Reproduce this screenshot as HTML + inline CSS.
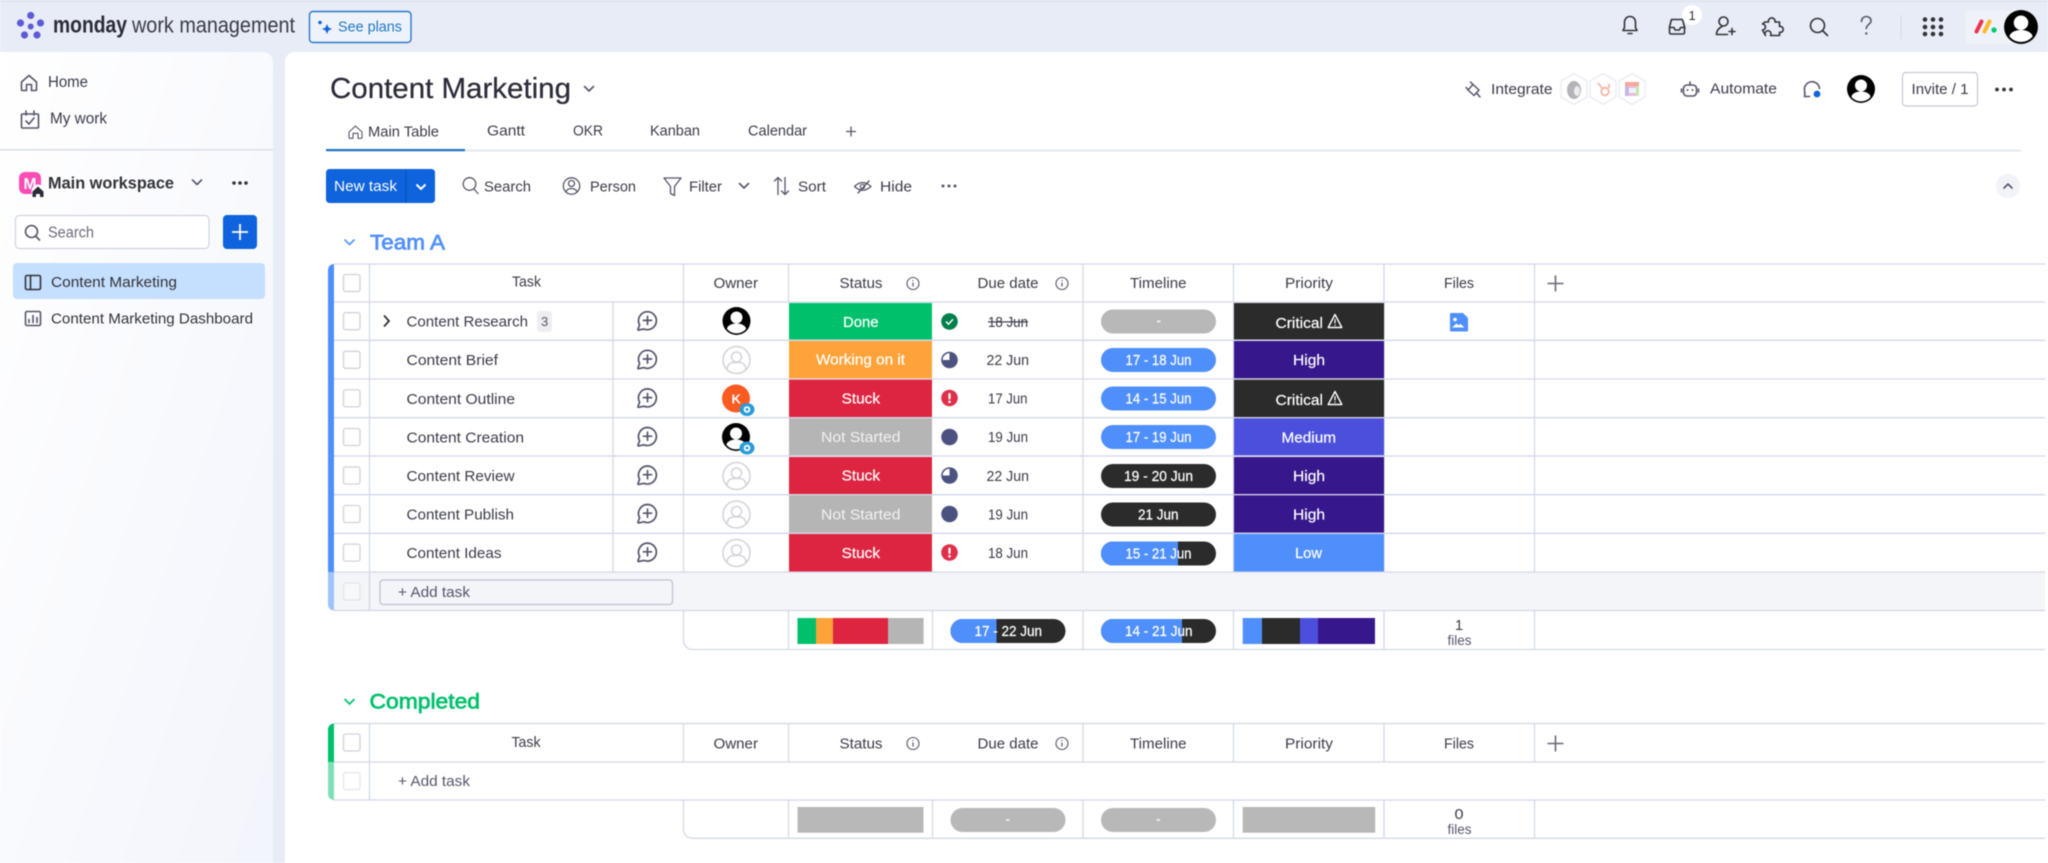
<!DOCTYPE html>
<html><head><meta charset="utf-8"><title>Content Marketing</title>
<style>
html,body{margin:0;padding:0;background:#fff;width:2048px;height:863px;overflow:hidden}
svg{display:block;filter:blur(.45px)}
text{font-family:"Liberation Sans",sans-serif;font-size:15px;fill:#323338}
.w{fill:#fff;stroke:#fff;stroke-width:.2}.g{fill:#55566a}.hd{fill:#3a3b48}
.s{fill:none;stroke:#55566a;stroke-width:1.6;stroke-linecap:round;stroke-linejoin:round}
.l{stroke:#d4d7e8;stroke-width:1.3;fill:none}
.cb{fill:#fff;stroke:#d0d2da;stroke-width:1.3}
</style></head><body>
<svg width="2048" height="863" viewBox="0 0 2048 863" xmlns="http://www.w3.org/2000/svg">
<defs>
<linearGradient id="sb" x1="0" y1="0" x2="1" y2="1"><stop offset="0" stop-color="#ffffff"/><stop offset="1" stop-color="#f3f5fc"/></linearGradient>
<filter id="sh" x="-5%" y="-50%" width="110%" height="200%"><feGaussianBlur stdDeviation="4"/></filter>
<g id="cm"><path class="s" d="M.5-9a9 9 0 1 1-3.600 17.300L-8.400 9.400q-.9 0-.6-.9L-7.400 4.300A9 9 0 0 1 .5-9z" style="stroke-width:1.700"/><path class="s" d="M.5-4.400v8.200M-3.600-.3h8.200" style="stroke-width:1.700"/></g>
<g id="av"><circle r="14" fill="#000"/><circle cy="-3.500" r="6" fill="#fff"/><path d="M-9.500 8a9.500 5.500 0 0 1 19 0a12.500 12.500 0 0 1-19 0z" fill="#fff"/></g>
<g id="ae"><circle r="13.500" fill="#fff" stroke="#d3d4da" stroke-width="1.600"/><circle cy="-3" r="5" fill="none" stroke="#d3d4da" stroke-width="1.500"/><path d="M-9.500 9.500q.5-6.500 6-7h7q5.500.5 6 7" fill="none" stroke="#d3d4da" stroke-width="1.500"/></g>
<g id="eye"><ellipse rx="7.500" ry="6.500" fill="#2a9bd8"/><circle r="3.300" fill="#fff"/><circle r="1.500" fill="#2a9bd8"/></g>
<g id="ok"><circle r="8.300" fill="#037f4c"/><path d="M-3.500 0l2.500 2.700 4.500-5" fill="none" stroke="#fff" stroke-width="1.500"/></g>
<g id="st"><circle r="8.300" fill="#df2f4a"/><rect x="-1.100" y="-5" width="2.200" height="6.500" rx="1" fill="#fff"/><circle cy="3.800" r="1.300" fill="#fff"/></g>
<g id="ns"><circle r="8.300" fill="#4c5280"/></g>
<g id="hf"><circle r="8.300" fill="#4c5280"/><path d="M0 0V-6.800A6.800 6.800 0 0 0-6.800 0z" fill="#fff"/></g>
<g id="inf"><circle r="6" fill="none" stroke="#55566a" stroke-width="1.100"/><path d="M0-1v4M0-3.400v1" stroke="#55566a" stroke-width="1.200"/></g>
<g id="wa"><path d="M0-7.500L6.800 5.500H-6.800z" fill="none" stroke="#fff" stroke-width="1.400" stroke-linejoin="round"/><path d="M0-3v4.500M0 2.600v1.300" stroke="#fff" stroke-width="1.200"/></g>
<g id="pl"><path d="M0-8v16M-8 0h16" stroke="#676879" stroke-width="1.600"/></g>
<g id="rb"><rect class="cb" x="343.500" y="-8.500" width="16.500" height="17" rx="2"/><use href="#cm" x="647" y="-.500"/></g>
<g id="ch"><path class="s" d="M-4.500-2.500L0 2l4.500-4.500"/></g>
</defs>

<rect width="2048" height="863" fill="#e8ecf6"/>
<rect width="2048" height="2" fill="#dfe3ec"/>
<path d="M0 52H263a10 10 0 0 1 10 10V863H0z" fill="url(#sb)"/>
<path d="M295 52H2048V863H285V62a10 10 0 0 1 10-10z" fill="#fff"/>

<!-- top bar -->
<g fill="#5b5bd6"><circle cx="30.700" cy="15.500" r="3.600"/><circle cx="20.500" cy="23" r="3.600"/><circle cx="40.500" cy="23" r="3.600"/><circle cx="30.700" cy="26.500" r="3"/><circle cx="24.500" cy="35" r="3.600"/><circle cx="37" cy="35" r="3.600"/></g>
<text x="53" y="32.500" style="font-size:23px;font-weight:700;fill:#2b2c38" textLength="74" lengthAdjust="spacingAndGlyphs">monday</text>
<text x="132" y="32.500" style="font-size:22px;fill:#3a3b48" textLength="163" lengthAdjust="spacingAndGlyphs">work management</text>
<rect x="309.500" y="11.500" width="101.500" height="31" rx="3.500" fill="#eef3fb" stroke="#2b78c5" stroke-width="1.400"/>
<path d="M327 24l1.500 3.500 3.500 1.500-3.500 1.500-1.500 3.500-1.500-3.500-3.500-1.500 3.500-1.500z" fill="#0f63dc"/><circle cx="320" cy="22.500" r="1.800" fill="#0f63dc"/>
<text x="338" y="31.500" style="font-size:15px;fill:#1f76c2" textLength="64" lengthAdjust="spacingAndGlyphs">See plans</text>

<path class="s" d="M1630 16.500c-3.500 0-5.500 2.700-5.500 6v5l-1.500 3h14l-1.500-3v-5c0-3.300-2-6-5.500-6zM1628 33.500h4" style="stroke:#323338"/>
<path class="s" d="M1669.500 27l2-7.500h11l2 7.500v5.500a1.500 1.500 0 0 1-1.500 1.500h-12a1.500 1.500 0 0 1-1.500-1.500zM1669.500 27.500h4.500l1 2.500h4.500l1-2.500h4.500" style="stroke:#323338"/>
<circle cx="1692" cy="15" r="10" fill="#fff"/><text x="1688.500" y="20" style="font-size:13px" textLength="6">1</text>
<circle class="s" cx="1723.500" cy="21.500" r="4.500" style="stroke:#323338"/><path class="s" d="M1722 26.500c-3 1.500-5.500 4-5.500 8h11M1729 31.500h6M1732 28.500v6" style="stroke:#323338"/>
<path class="s" d="M1765 22h3.500a3.300 3.300 0 1 1 6.500-1.500V22h4.500v4.500a3 3 0 1 1 0 5.800v3.200h-9a3 3 0 1 0-5 0l-3-5.500a3 3 0 0 0 0-6z" style="stroke:#323338"/>
<circle class="s" cx="1817.500" cy="25.500" r="7" style="stroke:#323338"/><path class="s" d="M1823 31l4.500 4.500" style="stroke:#323338"/>
<path class="s" d="M1861.500 21.500c0-3.500 2.500-5 4.800-5s4.700 1.500 4.700 4.500-4.500 3.500-4.700 7.500"/><circle cx="1866.300" cy="33.500" r="1.200" fill="#55566a"/>
<rect x="1900.500" y="15" width="1.200" height="24" fill="#d7dbe6"/>
<g fill="#323338"><circle cx="1925" cy="19.500" r="2.300"/><circle cx="1933" cy="19.500" r="2.300"/><circle cx="1941" cy="19.500" r="2.300"/><circle cx="1925" cy="27" r="2.300"/><circle cx="1933" cy="27" r="2.300"/><circle cx="1941" cy="27" r="2.300"/><circle cx="1925" cy="34" r="2.300"/><circle cx="1933" cy="34" r="2.300"/><circle cx="1941" cy="34" r="2.300"/></g>
<rect x="1965" y="10" width="60" height="34" rx="4" fill="#f0f2f9"/>
<path d="M1976.500 31.500l5-10" stroke="#e8364f" stroke-width="4" stroke-linecap="round"/><path d="M1984.500 31.500l5-10" stroke="#fcb92c" stroke-width="4" stroke-linecap="round"/><circle cx="1994" cy="30" r="2.600" fill="#00c875"/>
<g transform="translate(2021 27) scale(1.210)"><use href="#av"/></g>

<!-- sidebar -->
<path class="s" d="M21.500 82l7.500-6.500 7.500 6.500v7.500a1 1 0 0 1-1 1h-4v-6h-5v6h-4a1 1 0 0 1-1-1z"/>
<text x="48" y="87" style="font-size:15.500px" textLength="40" lengthAdjust="spacingAndGlyphs" class="hd">Home</text>
<rect class="s" x="21.500" y="114" width="17" height="14" rx="1"/><path class="s" d="M26 111v4M34 111v4M26 121l3 3 5-6"/>
<text x="50" y="123.500" style="font-size:15.500px" textLength="57" lengthAdjust="spacingAndGlyphs" class="hd">My work</text>
<rect x="0" y="149" width="273" height="1.600" fill="#dcdfe9"/>
<rect x="19" y="172" width="22" height="22" rx="6" fill="#fb4bb4"/>
<text x="23.500" y="189" style="font-size:16px;font-weight:700;fill:#fff" textLength="13" lengthAdjust="spacingAndGlyphs">M</text>
<circle cx="38" cy="191" r="6.500" fill="#fff"/><path d="M32.500 191.500l5.500-5 5.500 5v5.500h-3.500v-3h-4v3h-3.500z" fill="#2b2c38"/>
<text x="48" y="188.500" style="font-size:17px;font-weight:700" textLength="126" lengthAdjust="spacingAndGlyphs">Main workspace</text>
<g transform="translate(197 182.500)"><use href="#ch"/></g>
<g fill="#323338"><circle cx="234" cy="183" r="1.800"/><circle cx="240" cy="183" r="1.800"/><circle cx="246" cy="183" r="1.800"/></g>
<rect x="15.500" y="215.500" width="193.500" height="33" rx="4" fill="#fff" stroke="#d0d3df" stroke-width="1.200"/>
<circle class="s" cx="31.500" cy="231.500" r="6"/><path class="s" d="M36 236.500l3.500 3.500"/>
<text x="48" y="237.500" style="font-size:15.500px;fill:#6a6b7c" textLength="46" lengthAdjust="spacingAndGlyphs">Search</text>
<rect x="223" y="215" width="34" height="34" rx="4" fill="#0f63dc"/><path d="M240 224v16M232 232h16" stroke="#fff" stroke-width="1.800"/>
<rect x="13" y="263" width="252" height="36" rx="4" fill="#c5dffe"/>
<rect class="s" x="25.500" y="275.500" width="15" height="14" rx="1.500" style="stroke:#323338"/><path class="s" d="M30.500 275.500v14" style="stroke:#323338"/>
<text x="51" y="287" textLength="126" lengthAdjust="spacingAndGlyphs">Content Marketing</text>
<rect class="s" x="25.500" y="311.500" width="15" height="14" rx="1.500"/><path class="s" d="M29 322.500v-3M33 322.500v-7M37 322.500v-5"/>
<text x="51" y="323.500" textLength="202" lengthAdjust="spacingAndGlyphs">Content Marketing Dashboard</text>

<!-- header -->
<text x="330" y="98" style="font-size:29px;fill:#2b2c38;stroke:#2b2c38;stroke-width:.25" textLength="241" lengthAdjust="spacingAndGlyphs">Content Marketing</text>
<g transform="translate(589 89)"><use href="#ch"/></g>
<path class="s" d="M1473 84.500l6 5.500-5 5.500-6-5.500zM1466 87.500l2.500 2.500M1470.500 82l2.500 2.500M1477 93.500l3 3.500" style="stroke-width:1.500"/>
<text x="1491" y="94" textLength="61.500" lengthAdjust="spacingAndGlyphs" class="hd">Integrate</text>
<g fill="#fff" stroke="#e9ebf2" stroke-width="1.400"><polygon points="1574,73.500 1587,81 1587,97 1574,104.500 1561,97 1561,81"/><polygon points="1603,73.500 1616,81 1616,97 1603,104.500 1590,97 1590,81"/><polygon points="1632,73.500 1645,81 1645,97 1632,104.500 1619,97 1619,81"/></g>
<ellipse cx="1574" cy="90" rx="7" ry="9" fill="#b4b4b8"/><ellipse cx="1577" cy="91" rx="3" ry="5" fill="#ececee"/>
<path d="M1598 83l4 5M1609 84v4" fill="none" stroke="#f6b6a4" stroke-width="1.800"/><circle cx="1605" cy="91.500" r="3.800" fill="none" stroke="#f6b6a4" stroke-width="1.800"/>
<rect x="1625" y="82" width="14" height="14" fill="#e9bdd8"/><rect x="1625" y="82" width="14" height="4" fill="#f8a89c"/><rect x="1625" y="86" width="3.500" height="10" fill="#c2b6ee"/><rect x="1629" y="88" width="7" height="5" fill="#f1f3fb"/><rect x="1636" y="86" width="3" height="10" fill="#c4e8b4"/>
<rect class="s" x="1683.500" y="85" width="13" height="11" rx="3.500"/><path class="s" d="M1690 85v-3M1681.500 89v3M1698.500 89v3"/><circle cx="1687.500" cy="90" r="1" fill="#55566a"/><circle cx="1692.500" cy="90" r="1" fill="#55566a"/>
<text x="1710" y="93.500" textLength="67" lengthAdjust="spacingAndGlyphs" class="hd">Automate</text>
<path class="s" d="M1804.500 96.500c.8-2.500.3-4 0-6.500a7.500 7.500 0 0 1 15-1.500M1804.500 96.500h5"/><circle cx="1817" cy="94" r="3.400" fill="#0f63dc"/>
<use href="#av" x="1861" y="89"/>
<rect x="1902.500" y="72.500" width="75" height="33.500" rx="3.500" fill="#fff" stroke="#c8cad4" stroke-width="1.200"/>
<text x="1911.500" y="94" textLength="57" lengthAdjust="spacingAndGlyphs" class="hd">Invite / 1</text>
<g fill="#323338"><circle cx="1997" cy="89.500" r="1.900"/><circle cx="2004" cy="89.500" r="1.900"/><circle cx="2011" cy="89.500" r="1.900"/></g>

<!-- tabs -->
<path class="s" d="M349 132l6.500-6 6.500 6v5.500a.8.8 0 0 1-.8.8h-3.200v-5h-5v5h-3.200a.8.8 0 0 1-.8-.8z" style="stroke-width:1.100"/>
<text x="368" y="136.500" textLength="71" lengthAdjust="spacingAndGlyphs" class="hd">Main Table</text>
<text x="487" y="135.500" textLength="38" lengthAdjust="spacingAndGlyphs" class="hd">Gantt</text>
<text x="573" y="135.500" textLength="30" lengthAdjust="spacingAndGlyphs" class="hd">OKR</text>
<text x="650" y="135.500" textLength="50" lengthAdjust="spacingAndGlyphs" class="hd">Kanban</text>
<text x="748" y="135.500" textLength="59" lengthAdjust="spacingAndGlyphs" class="hd">Calendar</text>
<path d="M851 126.500v10M846 131.500h10" stroke="#55566a" stroke-width="1.300"/>
<rect x="326" y="149.800" width="1695" height="1.700" fill="#e1e4ed"/>
<rect x="326" y="149" width="139" height="2.200" fill="#1f76c2"/>

<!-- toolbar -->
<rect x="326" y="169" width="109" height="34" rx="3.500" fill="#0f63dc"/><rect x="405.500" y="169" width="1" height="34" fill="#0a4fb4"/>
<text x="334" y="191" style="fill:#fff" textLength="63" lengthAdjust="spacingAndGlyphs">New task</text>
<path d="M416.500 184.500l4.500 4.500 4.500-4.500" fill="none" stroke="#fff" stroke-width="2"/>
<circle cx="469.500" cy="184" r="6.300" class="s" style="stroke-width:1.300"/><path class="s" d="M474 189l4 4.500" style="stroke-width:1.300"/>
<text x="484" y="191.500" textLength="47" lengthAdjust="spacingAndGlyphs" class="hd">Search</text>
<circle class="s" cx="571.500" cy="186" r="8.200" style="stroke-width:1.300"/><circle class="s" cx="571.500" cy="183.500" r="3" style="stroke-width:1.300"/><path class="s" d="M566 192q1-3.500 5.500-3.500t5.500 3.500" style="stroke-width:1.300"/>
<text x="590" y="191.500" textLength="46" lengthAdjust="spacingAndGlyphs" class="hd">Person</text>
<path class="s" d="M664 178h17l-6.500 8.500v9l-4-2v-7z" style="stroke-width:1.300"/>
<text x="689" y="191.500" textLength="33" lengthAdjust="spacingAndGlyphs" class="hd">Filter</text>
<g transform="translate(744 186)"><use href="#ch"/></g>
<path class="s" d="M778 194.500v-17M774.500 181l3.500-3.500 3.500 3.500M785 177.500v17M781.500 191l3.500 3.500 3.500-3.500" style="stroke-width:1.300"/>
<text x="798" y="191.500" textLength="28" lengthAdjust="spacingAndGlyphs" class="hd">Sort</text>
<path class="s" d="M854.500 186.500q8-8 16.500 0q-8.500 7.500-16.500 0zM858 193l11-12" style="stroke-width:1.300"/><circle class="s" cx="862.500" cy="186.500" r="2.200" style="stroke-width:1.200"/>
<text x="880" y="191.500" textLength="32" lengthAdjust="spacingAndGlyphs" class="hd">Hide</text>
<g fill="#55566a"><circle cx="943" cy="186" r="1.500"/><circle cx="949" cy="186" r="1.500"/><circle cx="955" cy="186" r="1.500"/></g>
<circle cx="2008" cy="186" r="12" fill="#f1f3f8"/><path class="s" d="M2004 188l4-4 4 4"/>

<!-- TEAM A -->
<path d="M344.500 239.500l5 5 5-5" fill="none" stroke="#579bfc" stroke-width="1.800"/>
<text x="370" y="249.500" style="font-size:21px;fill:#4f8ffc;stroke:#4f8ffc;stroke-width:.7" textLength="75" lengthAdjust="spacingAndGlyphs">Team A</text>

<!-- lines team A -->
<path class="l" d="M334 264H2045M334 302H2045M334 340.300H2045M334 379H2045M334 417.700H2045M334 456H2045M334 494.700H2045M334 533.300H2045"/>
<rect x="334" y="572.500" width="1711" height="38" fill="#f4f5f9"/>
<path class="l" d="M334 572H2045M334 610.500H2045M692 649.500H2045"/>
<path d="M700 654H1520" stroke="#bcc0d0" stroke-width="3" opacity=".35" filter="url(#sh)"/>
<path class="l" d="M369.500 264V610M613 302V572M683.500 264V572M788.500 264V302M1083 264V572M1233.500 264V572M1384 264V572M1534.500 264V572"/>
<path class="l" d="M683.500 611V640a9 9 0 0 0 9 9.500M788.500 611V649M932.500 611V649M1083 611V649M1233.500 611V649M1384 611V649M1534.500 611V649"/>
<path d="M334 264a6 6 0 0 0-6 6V572h6z" fill="#4f8ffc"/>
<path d="M328 572V604a6 6 0 0 0 6 6.500V572z" fill="#9fc4fc"/>

<!-- header labels -->
<rect class="cb" x="343.500" y="274.500" width="16.500" height="17" rx="2"/>
<text x="512" y="286.500" textLength="29" lengthAdjust="spacingAndGlyphs" class="hd">Task</text>
<text x="713.500" y="288" textLength="44.500" lengthAdjust="spacingAndGlyphs" class="hd">Owner</text>
<text x="839.500" y="288" textLength="43" lengthAdjust="spacingAndGlyphs" class="hd">Status</text><use href="#inf" x="913" y="283.500"/>
<text x="977.500" y="288" textLength="61" lengthAdjust="spacingAndGlyphs" class="hd">Due date</text><use href="#inf" x="1062" y="283.500"/>
<text x="1130" y="288" textLength="56.500" lengthAdjust="spacingAndGlyphs" class="hd">Timeline</text>
<text x="1285" y="288" textLength="48" lengthAdjust="spacingAndGlyphs" class="hd">Priority</text>
<text x="1444" y="288" textLength="30" lengthAdjust="spacingAndGlyphs" class="hd">Files</text>
<use href="#pl" x="1555.500" y="283.500"/>

<!-- row bases -->
<use href="#rb" y="321.200"/><use href="#rb" y="359.800"/><use href="#rb" y="398.400"/><use href="#rb" y="437"/><use href="#rb" y="475.500"/><use href="#rb" y="514"/><use href="#rb" y="552.600"/>

<path d="M384 315.500l5 5.500-5 5.500" fill="none" stroke="#323338" stroke-width="1.800"/>
<text x="406.500" y="326.500" textLength="121.500" lengthAdjust="spacingAndGlyphs" class="hd">Content Research</text>
<rect x="537" y="311" width="15" height="21" rx="3" fill="#eceef2"/><text x="541" y="326" style="font-size:13px" class="g">3</text>
<text x="406.500" y="365" textLength="91.500" lengthAdjust="spacingAndGlyphs" class="hd">Content Brief</text>
<text x="406.500" y="404" textLength="108.500" lengthAdjust="spacingAndGlyphs" class="hd">Content Outline</text>
<text x="406.500" y="442.500" textLength="117.500" lengthAdjust="spacingAndGlyphs" class="hd">Content Creation</text>
<text x="406.500" y="481" textLength="108" lengthAdjust="spacingAndGlyphs" class="hd">Content Review</text>
<text x="406.500" y="519.500" textLength="107.500" lengthAdjust="spacingAndGlyphs" class="hd">Content Publish</text>
<text x="406.500" y="558" textLength="95" lengthAdjust="spacingAndGlyphs" class="hd">Content Ideas</text>

<!-- avatars -->
<use href="#av" x="736.500" y="321"/>
<use href="#ae" x="736.500" y="360"/>
<circle cx="736" cy="398.500" r="14" fill="#fb5a20"/><text x="731.500" y="403.500" style="font-size:13px;font-weight:700;fill:#fff">K</text><use href="#eye" x="747" y="409.500"/>
<use href="#av" x="736" y="437"/><use href="#eye" x="747" y="448"/>
<use href="#ae" x="736.500" y="476"/>
<use href="#ae" x="736.500" y="514.500"/>
<use href="#ae" x="736.500" y="553"/>

<!-- status -->
<rect x="789" y="303" width="143" height="36.500" fill="#00c06b"/>
<rect x="789" y="341" width="143" height="37.300" fill="#fda33a"/>
<rect x="789" y="379.700" width="143" height="37.300" fill="#dd2440"/>
<rect x="789" y="418.300" width="143" height="37" fill="#b5b5b5"/>
<rect x="789" y="457" width="143" height="37" fill="#dd2440"/>
<rect x="789" y="495.300" width="143" height="37.300" fill="#b5b5b5"/>
<rect x="789" y="534" width="143" height="37.500" fill="#dd2440"/>
<text x="843" y="327" class="w" textLength="35.500" lengthAdjust="spacingAndGlyphs">Done</text>
<text x="816" y="364.500" class="w" textLength="89" lengthAdjust="spacingAndGlyphs">Working on it</text>
<text x="841.700" y="403.500" class="w" textLength="38.300" lengthAdjust="spacingAndGlyphs">Stuck</text>
<text x="821" y="442" style="fill:#f2f2f2" textLength="79.500" lengthAdjust="spacingAndGlyphs">Not Started</text>
<text x="841.700" y="480.500" class="w" textLength="38.300" lengthAdjust="spacingAndGlyphs">Stuck</text>
<text x="821" y="519.500" style="fill:#f2f2f2" textLength="79.500" lengthAdjust="spacingAndGlyphs">Not Started</text>
<text x="841.700" y="558" class="w" textLength="38.300" lengthAdjust="spacingAndGlyphs">Stuck</text>

<!-- due -->
<use href="#ok" x="949.500" y="321.500"/><use href="#hf" x="949.500" y="360"/><use href="#st" x="949.500" y="398"/><use href="#ns" x="949.500" y="437"/><use href="#hf" x="949.500" y="475.500"/><use href="#ns" x="949.500" y="514"/><use href="#st" x="949.500" y="552.500"/>
<text x="988" y="327" style="font-size:14.500px" textLength="40" lengthAdjust="spacingAndGlyphs" class="hd">18 Jun</text><rect x="988" y="321.300" width="40" height="1.200" fill="#3a3b48"/>
<text x="986.500" y="365" style="font-size:14.500px" textLength="42.500" lengthAdjust="spacingAndGlyphs" class="hd">22 Jun</text>
<text x="988" y="403.500" style="font-size:14.500px" textLength="39.500" lengthAdjust="spacingAndGlyphs" class="hd">17 Jun</text>
<text x="988" y="442" style="font-size:14.500px" textLength="40" lengthAdjust="spacingAndGlyphs" class="hd">19 Jun</text>
<text x="986.500" y="481" style="font-size:14.500px" textLength="42.500" lengthAdjust="spacingAndGlyphs" class="hd">22 Jun</text>
<text x="988" y="519.500" style="font-size:14.500px" textLength="40" lengthAdjust="spacingAndGlyphs" class="hd">19 Jun</text>
<text x="988" y="558" style="font-size:14.500px" textLength="40" lengthAdjust="spacingAndGlyphs" class="hd">18 Jun</text>

<!-- timeline -->
<rect x="1101" y="309.500" width="115" height="24" rx="12" fill="#b8b8b8"/><rect x="1157" y="320.500" width="3.500" height="1.800" fill="#eee"/>
<rect x="1101" y="348" width="115" height="24" rx="12" fill="#4f8ffc"/><text x="1125.500" y="365" class="w" textLength="66" lengthAdjust="spacingAndGlyphs">17 - 18 Jun</text>
<rect x="1101" y="386.500" width="115" height="24" rx="12" fill="#4f8ffc"/><text x="1125.500" y="403.500" class="w" textLength="66" lengthAdjust="spacingAndGlyphs">14 - 15 Jun</text>
<rect x="1101" y="425" width="115" height="24" rx="12" fill="#4f8ffc"/><text x="1125.500" y="442" class="w" textLength="66" lengthAdjust="spacingAndGlyphs">17 - 19 Jun</text>
<rect x="1101" y="464" width="115" height="24" rx="12" fill="#2b2b2b"/><text x="1124" y="481" class="w" textLength="69" lengthAdjust="spacingAndGlyphs">19 - 20 Jun</text>
<rect x="1101" y="502.500" width="115" height="24" rx="12" fill="#2b2b2b"/><text x="1138" y="519.500" class="w" textLength="40.500" lengthAdjust="spacingAndGlyphs">21 Jun</text>
<rect x="1101" y="541.500" width="115" height="24" rx="12" fill="#2b2b2b"/><path d="M1113 541.500H1178V565.500H1113a12 12 0 0 1 0-24z" fill="#4f8ffc"/><text x="1125.500" y="558.500" class="w" textLength="66" lengthAdjust="spacingAndGlyphs">15 - 21 Jun</text>

<!-- priority -->
<rect x="1234" y="303" width="150" height="36.500" fill="#2b2b2b"/>
<rect x="1234" y="341" width="150" height="37.300" fill="#36178c"/>
<rect x="1234" y="379.700" width="150" height="37.300" fill="#2b2b2b"/>
<rect x="1234" y="418.300" width="150" height="37" fill="#4c4fdc"/>
<rect x="1234" y="457" width="150" height="37" fill="#36178c"/>
<rect x="1234" y="495.300" width="150" height="37.300" fill="#36178c"/>
<rect x="1234" y="534" width="150" height="37.500" fill="#4f8ffc"/>
<text x="1275.500" y="328" class="w" textLength="47.500" lengthAdjust="spacingAndGlyphs">Critical</text><use href="#wa" x="1335" y="322"/>
<text x="1293" y="365" class="w" textLength="32" lengthAdjust="spacingAndGlyphs">High</text>
<text x="1275.500" y="405" class="w" textLength="47.500" lengthAdjust="spacingAndGlyphs">Critical</text><use href="#wa" x="1335" y="399"/>
<text x="1281.500" y="442.500" class="w" textLength="54.500" lengthAdjust="spacingAndGlyphs">Medium</text>
<text x="1293" y="481" class="w" textLength="32" lengthAdjust="spacingAndGlyphs">High</text>
<text x="1293" y="519.500" class="w" textLength="32" lengthAdjust="spacingAndGlyphs">High</text>
<text x="1295" y="558" class="w" textLength="27" lengthAdjust="spacingAndGlyphs">Low</text>

<!-- file icon -->
<path d="M1451 313h12l5 5v12.500a1 1 0 0 1-1 1h-16a1 1 0 0 1-1-1V314a1 1 0 0 1 1-1z" fill="#4f8ffc"/>
<circle cx="1455" cy="319.500" r="1.800" fill="#fff"/><path d="M1452 327.500l4.500-4 2 1.700 2-1.200 4 3.500z" fill="#fff"/>

<!-- add task row -->
<rect x="343.500" y="583" width="16.500" height="17" rx="2" fill="#f7f8fa" stroke="#e2e3ea" stroke-width="1.200"/>
<rect x="380" y="580" width="292.500" height="24.500" rx="3" fill="#f4f5f9" stroke="#bfc2ce" stroke-width="1.300"/>
<text x="398" y="597" textLength="72" lengthAdjust="spacingAndGlyphs" class="g">+ Add task</text>

<!-- summary A -->
<rect x="797.500" y="618" width="18.500" height="26" fill="#00c06b"/><rect x="816" y="618" width="17" height="26" fill="#fda33a"/><rect x="833" y="618" width="55" height="26" fill="#dd2440"/><rect x="888" y="618" width="35.600" height="26" fill="#b5b5b5"/>
<rect x="950.500" y="619" width="115" height="24" rx="12" fill="#2b2b2b"/><path d="M962.500 619H996.500V643H962.500a12 12 0 0 1 0-24z" fill="#4f8ffc"/><text x="974.500" y="636" class="w" textLength="67.500" lengthAdjust="spacingAndGlyphs">17 - 22 Jun</text>
<rect x="1101" y="619" width="115" height="24" rx="12" fill="#2b2b2b"/><path d="M1113 619H1182V643H1113a12 12 0 0 1 0-24z" fill="#4f8ffc"/><text x="1125" y="636" class="w" textLength="67.500" lengthAdjust="spacingAndGlyphs">14 - 21 Jun</text>
<rect x="1242.700" y="618" width="19.500" height="26" fill="#4f8ffc"/><rect x="1262" y="618" width="38" height="26" fill="#2b2b2b"/><rect x="1300" y="618" width="18" height="26" fill="#4c4fdc"/><rect x="1318" y="618" width="57" height="26" fill="#36178c"/>
<text x="1455" y="630" textLength="8" lengthAdjust="spacingAndGlyphs" class="hd">1</text>
<text x="1447.500" y="645" style="font-size:13.500px" textLength="24" lengthAdjust="spacingAndGlyphs" class="g">files</text>

<!-- COMPLETED -->
<path d="M344.500 699l5 5 5-5" fill="none" stroke="#00c875" stroke-width="1.800"/>
<text x="369.500" y="708.500" style="font-size:21px;fill:#00c06b;stroke:#00c06b;stroke-width:.7" textLength="110.500" lengthAdjust="spacingAndGlyphs">Completed</text>
<path class="l" d="M334 723.500H2045M334 762H2045M334 800H2045M692 838.300H2045"/>
<path d="M700 843H1520" stroke="#bcc0d0" stroke-width="3" opacity=".35" filter="url(#sh)"/>
<path d="M334 723.500a6 6 0 0 0-6 6V762h6z" fill="#00c06b"/>
<path d="M328 762V794a6 6 0 0 0 6 6V762z" fill="#7fe0b8"/>
<path class="l" d="M369.500 723.500V800M683.500 723.500V762M788.500 723.500V762M1083 723.500V762M1233.500 723.500V762M1384 723.500V762M1534.500 723.500V762"/>
<path class="l" d="M683.500 800V829a9 9 0 0 0 9 9.300M788.500 800V838M932.500 800V838M1083 800V838M1233.500 800V838M1384 800V838M1534.500 800V838"/>
<rect class="cb" x="343.500" y="734" width="16.500" height="17" rx="2"/>
<rect x="343.500" y="772.500" width="16.500" height="17" rx="2" fill="#fff" stroke="#e4e5ea" stroke-width="1.200"/>
<text x="511.500" y="747" textLength="29" lengthAdjust="spacingAndGlyphs" class="hd">Task</text>
<text x="713.500" y="748.500" textLength="44.500" lengthAdjust="spacingAndGlyphs" class="hd">Owner</text>
<text x="839.500" y="748.500" textLength="43" lengthAdjust="spacingAndGlyphs" class="hd">Status</text><use href="#inf" x="913" y="743.500"/>
<text x="977.500" y="748.500" textLength="61" lengthAdjust="spacingAndGlyphs" class="hd">Due date</text><use href="#inf" x="1062" y="743.500"/>
<text x="1130" y="748.500" textLength="56.500" lengthAdjust="spacingAndGlyphs" class="hd">Timeline</text>
<text x="1285" y="748.500" textLength="48" lengthAdjust="spacingAndGlyphs" class="hd">Priority</text>
<text x="1444" y="748.500" textLength="30" lengthAdjust="spacingAndGlyphs" class="hd">Files</text>
<use href="#pl" x="1555.500" y="743.500"/>
<text x="398" y="786" textLength="72" lengthAdjust="spacingAndGlyphs" class="g">+ Add task</text>
<rect x="797.500" y="807" width="126" height="25.700" fill="#b8b8b8"/>
<rect x="950.500" y="808" width="115" height="24" rx="12" fill="#b8b8b8"/><rect x="1006" y="819" width="3.500" height="1.800" fill="#eee"/>
<rect x="1101" y="808" width="115" height="24" rx="12" fill="#b8b8b8"/><rect x="1156.500" y="819" width="3.500" height="1.800" fill="#eee"/>
<rect x="1242.700" y="807" width="132.500" height="25.700" fill="#b8b8b8"/>
<text x="1454.500" y="819" textLength="9" lengthAdjust="spacingAndGlyphs" class="hd">0</text>
<text x="1447.500" y="834" style="font-size:13.500px" textLength="24" lengthAdjust="spacingAndGlyphs" class="g">files</text>
</svg>
</body></html>
